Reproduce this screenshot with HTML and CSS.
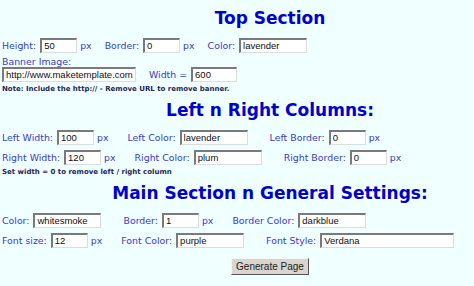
FILE: index.html
```html
<!DOCTYPE html>
<html lang="en">
<head>
    <meta charset="UTF-8">
    <title>Page Generator</title>
    <link rel="stylesheet" href="styles.css">
</head>
<body>
    <form class="generator">
        <h2 class="section-title first">Top Section</h2>
        <div class="row">
            <div class="field"><span class="label">Height:</span><input class="box w-sm" value="50"><span class="unit">px</span></div>
            <div class="field"><span class="label">Border:</span><input class="box w-sm" value="0"><span class="unit">px</span></div>
            <div class="field"><span class="label">Color:</span><input class="box w-md" value="lavender"></div>
        </div>
        <div class="label-line"><span class="label">Banner Image:</span></div>
        <div class="row">
            <div class="field"><input class="box w-xl" value="http://www.maketemplate.com/"></div>
            <div class="field"><span class="label">Width =</span><input class="box w-ml" value="600"></div>
        </div>
        <div class="note">Note: Include the http:// - Remove URL to remove banner.</div>

        <h2 class="section-title">Left n Right Columns:</h2>
        <div class="row row-wide">
            <div class="field"><span class="label">Left Width:</span><input class="box w-sm" value="100"><span class="unit">px</span></div>
            <div class="field"><span class="label">Left Color:</span><input class="box w-md" value="lavender"></div>
            <div class="field push"><span class="label">Left Border:</span><input class="box w-sm" value="0"><span class="unit">px</span></div>
        </div>
        <div class="row row-wide tight">
            <div class="field"><span class="label">Right Width:</span><input class="box w-sm" value="120"><span class="unit">px</span></div>
            <div class="field"><span class="label">Right Color:</span><input class="box w-md" value="plum"></div>
            <div class="field push"><span class="label">Right Border:</span><input class="box w-sm" value="0"><span class="unit">px</span></div>
        </div>
        <div class="note">Set width = 0 to remove left / right column</div>

        <h2 class="section-title">Main Section n General Settings:</h2>
        <div class="row row-wide">
            <div class="field"><span class="label">Color:</span><input class="box w-md" value="whitesmoke"></div>
            <div class="field push"><span class="label">Border:</span><input class="box w-sm" value="1"><span class="unit">px</span></div>
            <div class="field"><span class="label">Border Color:</span><input class="box w-md" value="darkblue"></div>
        </div>
        <div class="row row-wide tight">
            <div class="field"><span class="label">Font size:</span><input class="box w-sm" value="12"><span class="unit">px</span></div>
            <div class="field"><span class="label">Font Color:</span><input class="box w-md" value="purple"></div>
            <div class="field push"><span class="label">Font Style:</span><input class="box w-xl" value="Verdana"></div>
        </div>

        <div class="actions">
            <button type="button" class="generate">Generate Page</button>
        </div>
    </form>
</body>
</html>
```

FILE: styles.css
```css
html, body {
    margin: 0;
    padding: 0;
    background-color: #f0ffff;
}
body {
    font-family: "DejaVu Sans", Verdana, sans-serif;
}
.generator {
    width: 474px;
    padding: 8px 0 0 2px;
    box-sizing: border-box;
}
.section-title {
    margin: 4px 0 9px 64px; /* centre of the titles sits at x=270 */
    height: 20px;
    line-height: 20px;
    font-size: 17px;
    font-weight: bold;
    color: #0000cc;
    text-align: center;
}
.section-title.first {
    margin-top: 0;
}
.row {
    display: flex;
    align-items: center;
    gap: 13px;
    height: 16px;
}
.row-wide {
    gap: 19px;
}
.tight {
    margin-top: 4px;
}
.field {
    display: flex;
    align-items: center;
    gap: 4px;
}
.push {
    margin-left: 3px;
}
.label, .unit {
    font-size: 9.4px;
    color: #3a3acc;
    white-space: nowrap;
}
.unit {
    margin-left: -1px;
}
.label-line {
    height: 13px;
    line-height: 13px;
}
.box {
    height: 15px;
    padding: 0 2px;
    box-sizing: border-box;
    border-width: 1px;
    border-style: solid;
    border-color: #7a7a7a #dcdcdc #dcdcdc #7a7a7a;
    border-top-width: 2px;
    border-left-width: 2px;
    background-color: #fff;
    font-family: "Liberation Sans", Arial, sans-serif;
    font-size: 9.5px;
    color: #111;
    outline: none;
}
.w-sm { width: 37px; }
.w-ml { width: 46px; }
.w-md { width: 68px; }
.w-xl { width: 134px; }
.note {
    height: 14px;
    line-height: 14px;
    font-size: 7px;
    font-weight: bold;
    color: #262659;
}
.actions {
    margin: 7px 0 0 64px;
    text-align: center;
}
.generate {
    height: 17px;
    padding: 0 4px;
    font-family: "Liberation Sans", Arial, sans-serif;
    font-size: 10px;
    color: #222;
    background-color: #d8d6ce;
    border-width: 1px;
    border-style: solid;
    border-color: #f4f4f4 #555 #555 #f4f4f4;
}
```
